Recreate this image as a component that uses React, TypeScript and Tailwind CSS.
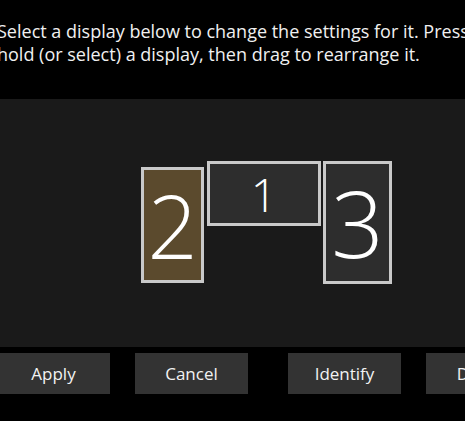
import React from 'react';

type Screen = { id: number; left: number; top: number; w: number; h: number; size: string; active?: boolean };

const screens: Screen[] = [
  { id: 2, left: 141, top: 68, w: 63, h: 116, size: 'text-[88px]', active: true },
  { id: 1, left: 207, top: 62, w: 114, h: 65, size: 'text-[46px]' },
  { id: 3, left: 323, top: 62, w: 69, h: 123, size: 'text-[92px]' },
];

const Monitor = ({ s }: { s: Screen }) => (
  <div
    className={`absolute flex items-center justify-center border-[3px] border-[#c9c9c9] ${s.active ? 'bg-[#5b4a2d]' : 'bg-[#2d2d2d]'}`}
    style={{ left: s.left, top: s.top, width: s.w, height: s.h }}
  >
    <span className={`${s.size} font-light leading-none text-white`}>{s.id}</span>
  </div>
);

const Btn = ({ label }: { label: string }) => (
  <button className="w-[113px] h-[41px] shrink-0 bg-[#333333] text-[17px] text-[#f2f2f2]">{label}</button>
);

export default function App() {
  return (
    <div className="w-[465px] h-[421px] bg-black overflow-hidden text-white font-['Open_Sans',sans-serif]">
      <div className="pt-[20px] ml-[-3px] text-[18px] leading-[23px] text-[#f0f0f0] whitespace-nowrap">
        <p>Select a display below to change the settings for it. Press and</p>
        <p>hold (or select) a display, then drag to rearrange it.</p>
      </div>

      <div className="relative mt-[33px] h-[248px] bg-[#1a1a1a]">
        {screens.map((s) => (
          <Monitor key={s.id} s={s} />
        ))}
      </div>

      <div className="flex mt-[6px] ml-[-3px]">
        <Btn label="Apply" />
        <div className="w-[25px] shrink-0" />
        <Btn label="Cancel" />
        <div className="w-[40px] shrink-0" />
        <Btn label="Identify" />
        <div className="w-[25px] shrink-0" />
        <Btn label="Detect" />
      </div>
    </div>
  );
}
